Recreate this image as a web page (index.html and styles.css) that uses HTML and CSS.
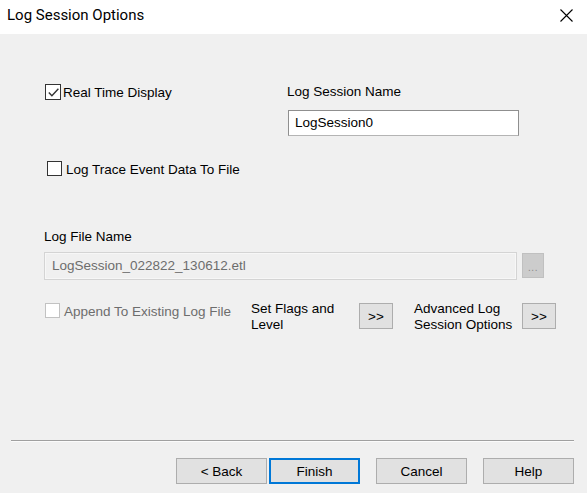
FILE: index.html
```html
<!DOCTYPE html>
<html>
<head>
<meta charset="utf-8">
<link rel="stylesheet" href="styles.css">
</head>
<body>
<div class="window">
  <div class="titlebar">
    <span class="title">Log Session Options</span>
    <svg class="close" width="13" height="13" viewBox="0 0 13 13"><path d="M0.5 0.5 L12.5 12.5 M12.5 0.5 L0.5 12.5" stroke="#000" stroke-width="1.1" fill="none"/></svg>
  </div>
  <div class="content">
    <div class="row1">
      <div class="col-left">
        <div class="check first">
          <span class="box"><svg width="13" height="13" viewBox="0 0 13 13"><path d="M1.8 6.6 L4.9 9.8 L11.4 2.8" stroke="#333" stroke-width="1.4" fill="none"/></svg></span>
          <span class="check-text">Real Time Display</span>
        </div>
      </div>
      <div class="col-right">
        <div class="label">Log Session Name</div>
        <div class="input session">LogSession0</div>
      </div>
    </div>
    <div class="check trace">
      <span class="box"></span>
      <span class="check-text">Log Trace Event Data To File</span>
    </div>
    <div class="label file-label">Log File Name</div>
    <div class="file-row">
      <div class="input disabled file-input">LogSession_022822_130612.etl</div>
      <div class="dots">...</div>
    </div>
    <div class="opt-row">
      <div class="check append">
        <span class="box disabled-box"></span>
        <span class="check-text gray">Append To Existing Log File</span>
      </div>
      <div class="opt-text">Set Flags and<br>Level</div>
      <div class="btn small">&gt;&gt;</div>
      <div class="opt-text adv">Advanced Log<br>Session Options</div>
      <div class="btn small">&gt;&gt;</div>
    </div>
    <div class="footer">
      <div class="sep"></div>
      <div class="buttons">
        <div class="btn big">&lt; Back</div>
        <div class="btn big default">Finish</div>
        <div class="btn big cancel">Cancel</div>
        <div class="btn big help">Help</div>
      </div>
    </div>
  </div>
</div>
</body>
</html>
```

FILE: styles.css
```css
html, body {
  margin: 0;
  padding: 0;
}
body {
  width: 587px;
  height: 493px;
  overflow: hidden;
  background: #f0f0f0;
  font-family: "Liberation Sans", Arial, sans-serif;
  font-size: 13.5px;
  line-height: 16px;
  color: #000;
}
.window {
  width: 587px;
  height: 493px;
  display: flex;
  flex-direction: column;
}
.titlebar {
  height: 34px;
  background: #fff;
  display: flex;
  align-items: flex-start;
  padding-left: 7px;
  box-sizing: border-box;
}
.title {
  font-family: "Segoe UI", Roboto, sans-serif;
  font-size: 15px;
  line-height: 20px;
  margin-top: 5px;
  color: #000;
}
.close {
  margin-left: auto;
  margin-right: 14px;
  margin-top: 9px;
}
.content {
  flex: 1;
  display: flex;
  flex-direction: column;
  padding-top: 50px;
  padding-left: 45px;
}
.row1 {
  display: flex;
}
.col-left {
  width: 242px;
}
.col-right {
  display: flex;
  flex-direction: column;
}
.input {
  box-sizing: border-box;
  height: 26px;
  border: 1px solid #8f8f8f;
  border-bottom-color: #b4b4b4;
  background: #fff;
  padding: 4px 6px;
  white-space: nowrap;
}
.session {
  width: 231px;
  margin-top: 10px;
  margin-left: 1px;
}
.check {
  display: flex;
  align-items: flex-start;
}
.first .check-text {
  padding-top: 1px;
}
.box {
  box-sizing: border-box;
  width: 15px;
  height: 15px;
  border: 1px solid #333;
  background: #fff;
  display: flex;
  align-items: center;
  justify-content: center;
  margin-right: 3px;
}
.first .box {
  width: 16px;
  height: 16px;
  margin-right: 2px;
}
.trace {
  margin-top: 26px;
  margin-left: 2px;
}
.trace .box {
  margin-top: -1px;
  margin-right: 4px;
}
.file-label {
  margin-top: 51px;
  margin-left: -1px;
}
.file-row {
  display: flex;
  align-items: flex-start;
  margin-top: 7px;
  margin-left: -1px;
}
.file-input {
  width: 473px;
  height: 28px;
  padding: 5px 7px;
  background: #f0f0f0;
  border: 1px solid #d4d4d4;
  color: #6d6d6d;
  box-shadow: inset 0 0 0 1px #f7f7f7;
}
.dots {
  box-sizing: border-box;
  width: 22px;
  height: 25px;
  margin-left: 5px;
  margin-top: 1px;
  background: #cccccc;
  border: 1px solid #c0c0c0;
  color: #8a8a8a;
  font-size: 10px;
  line-height: 10px;
  text-align: center;
  padding-top: 9px;
  letter-spacing: 0.5px;
}
.opt-row {
  display: flex;
  align-items: flex-start;
  margin-top: 21px;
}
.append {
  width: 206px;
  margin-top: 3px;
}
.append .box {
  margin-top: -1px;
  margin-right: 4px;
}
.disabled-box {
  border-color: #c2c2c2;
  background: #fff;
}
.gray {
  color: #6d6d6d;
}
.opt-text {
  width: 108px;
}
.adv {
  margin-left: 21px;
}
.btn {
  box-sizing: border-box;
  background: #e1e1e1;
  border: 1px solid #adadad;
  text-align: center;
  white-space: nowrap;
}
.small {
  width: 34px;
  height: 26px;
  margin-top: 2px;
  padding-top: 5px;
}
.footer {
  margin-top: auto;
  margin-left: -45px;
  padding-bottom: 9px;
}
.sep {
  margin-left: 11px;
  width: 563px;
  height: 0;
  border-top: 1px solid #a0a0a0;
  border-bottom: 1px solid #fbfbfb;
}
.buttons {
  display: flex;
  justify-content: flex-end;
  padding-right: 13px;
  margin-top: 16px;
}
.big {
  width: 91px;
  height: 26px;
  padding-top: 5px;
}
.default {
  border: 2px solid #0078d7;
  padding-top: 4px;
  margin-left: 2px;
}
.cancel, .help {
  margin-left: 16px;
}
```
